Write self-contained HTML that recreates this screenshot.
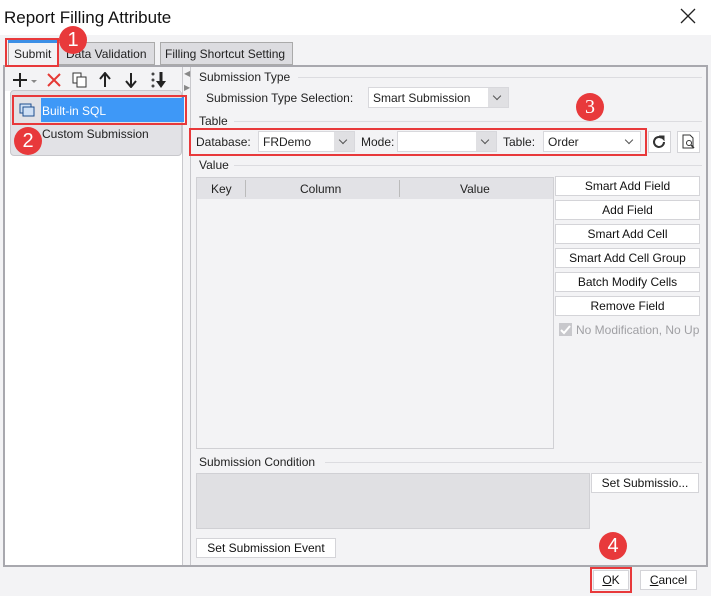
<!DOCTYPE html>
<html><head><style>
*{box-sizing:border-box;margin:0;padding:0}
body{width:711px;height:596px;background:#f3f3f5;font-family:"Liberation Sans",sans-serif;font-size:12px;color:#222;position:relative;overflow:hidden}
.a{position:absolute}
.t{position:absolute;white-space:nowrap;font-size:12px;line-height:14px}
.btn{position:absolute;background:#fff;border:1px solid #d4d4d8;text-align:center;font-size:12px;line-height:18px;color:#111}
.combo{position:absolute;background:#fff;border:1px solid #d8d8dc;height:21px}
.combo span{position:absolute;left:4px;top:3px;font-size:12px}
.combo i{position:absolute;right:0;top:0;width:20px;height:19px;background:#e0e0e3}
.combo i:after{content:"";position:absolute;left:6px;top:5px;width:5px;height:5px;border-right:1px solid #555;border-bottom:1px solid #555;transform:rotate(45deg)}
.sep{position:absolute;height:1px;background:#dcdce0}
.red{position:absolute;border:2px solid #e8393b}
.circ{position:absolute;width:28px;height:28px;border-radius:50%;background:#e8393b;color:#fff;font-size:20px;line-height:28px;text-align:center}
</style></head><body>
<div class="a" style="left:0;top:0;width:711px;height:35px;background:#fff"></div>
<div class="t" style="left:4px;top:8px;font-size:17px;line-height:20px;color:#111">Report Filling Attribute</div>
<svg class="a" style="left:680px;top:8px" width="16" height="16"><path d="M1 1L15 15M15 1L1 15" stroke="#222" stroke-width="1.3"/></svg>

<div class="a" style="left:8px;top:40px;width:50px;height:26px;background:#f3f3f5;border:1px solid #aaa;border-bottom:none"></div>
<div class="a" style="left:8px;top:40px;width:50px;height:3px;background:#3c8fe6"></div>
<div class="t" style="left:14px;top:47px">Submit</div>
<div class="a" style="left:58px;top:42px;width:97px;height:23px;background:#dcdce0;border:1px solid #aaa"></div>
<div class="t" style="left:66px;top:47px">Data Validation</div>
<div class="a" style="left:160px;top:42px;width:133px;height:23px;background:#dcdce0;border:1px solid #aaa"></div>
<div class="t" style="left:165px;top:47px">Filling Shortcut Setting</div>

<div class="a" style="left:3px;top:65px;width:705px;height:502px;border:2px solid #a8a8ae;background:#f3f3f5"></div>
<div class="a" style="left:5px;top:91px;width:177px;height:474px;background:#fff"></div>
<div class="a" style="left:182px;top:67px;width:1px;height:498px;background:#c8c8cc"></div>
<div class="a" style="left:190px;top:67px;width:1px;height:498px;background:#c8c8cc"></div>
<div class="a" style="left:182px;top:96px;width:2px;height:14px;background:#3c8fe6"></div>
<div class="t" style="left:184px;top:67px;font-size:8px;color:#888">◀<br>▶</div>
<svg class="a" style="left:12px;top:72px" width="26" height="16"><path d="M1 8H15M8 1V15" stroke="#222" stroke-width="2"/><path d="M19 8L22 11L25 8Z" fill="#888"/></svg>
<svg class="a" style="left:47px;top:73px" width="14" height="14"><path d="M1 1L13 13M13 1L1 13" stroke="#e53935" stroke-width="2"/></svg>
<svg class="a" style="left:72px;top:72px" width="16" height="16"><rect x="1" y="1" width="8" height="10" fill="#fff" stroke="#333"/><rect x="5" y="5" width="9" height="10" fill="#fff" stroke="#333"/></svg>
<svg class="a" style="left:99px;top:72px" width="12" height="16"><path d="M6 15V2M1 7L6 1L11 7" stroke="#222" stroke-width="2" fill="none"/></svg>
<svg class="a" style="left:125px;top:72px" width="12" height="16"><path d="M6 1V14M1 9L6 15L11 9" stroke="#222" stroke-width="2" fill="none"/></svg>
<svg class="a" style="left:150px;top:71px" width="18" height="18"><circle cx="3" cy="3" r="1.5" fill="#444"/><circle cx="3" cy="9" r="1.5" fill="#444"/><circle cx="3" cy="15" r="1.5" fill="#444"/><path d="M11 1V11" stroke="#222" stroke-width="3"/><path d="M6 10L11 17L16 10Z" fill="#222"/></svg>
<div class="a" style="left:10px;top:90px;width:172px;height:66px;background:#e2e2e6;border:1px solid #c8c8cc;border-radius:4px"></div>
<div class="a" style="left:41px;top:98px;width:143px;height:24px;background:#3e98f7"></div>
<svg class="a" style="left:19px;top:103px" width="16" height="14"><rect x="1" y="1" width="11" height="9" fill="#cfe0f5" stroke="#1f4f8f"/><rect x="4" y="4" width="11" height="9" fill="#cfe0f5" stroke="#1f4f8f"/></svg>
<div class="t" style="left:42px;top:104px;color:#fff">Built-in SQL</div>
<div class="t" style="left:42px;top:127px">Custom Submission</div>
<div class="red" style="left:12px;top:95px;width:175px;height:30px"></div>
<div class="red" style="left:5px;top:38px;width:54px;height:29px"></div>

<div class="t" style="left:199px;top:70px">Submission Type</div>
<div class="sep" style="left:298px;top:77px;width:404px"></div>
<div class="t" style="left:206px;top:91px">Submission Type Selection:</div>
<div class="combo" style="left:368px;top:87px;width:141px"><span>Smart Submission</span><i></i></div>
<div class="t" style="left:199px;top:114px">Table</div>
<div class="sep" style="left:234px;top:121px;width:468px"></div>
<div class="t" style="left:196px;top:135px">Database:</div>
<div class="combo" style="left:258px;top:131px;width:97px"><span>FRDemo</span><i></i></div>
<div class="t" style="left:361px;top:135px">Mode:</div>
<div class="combo" style="left:397px;top:131px;width:100px"><span></span><i></i></div>
<div class="t" style="left:503px;top:135px">Table:</div>
<div class="combo" style="left:543px;top:131px;width:98px"><span>Order</span><i style="background:#fff"></i></div>
<div class="red" style="left:189px;top:128px;width:458px;height:28px"></div>
<div class="a" style="left:648px;top:131px;width:23px;height:22px;background:#fff;border:1px solid #d4d4d8"></div>
<svg class="a" style="left:651px;top:134px" width="16" height="16"><path d="M13 8A5 5 0 1 1 11 4" stroke="#333" stroke-width="2" fill="none"/><path d="M9 2L13 2L13 6Z" fill="#333" stroke="#333"/></svg>
<div class="a" style="left:677px;top:131px;width:23px;height:22px;background:#fff;border:1px solid #d4d4d8"></div>
<svg class="a" style="left:681px;top:134px" width="16" height="16"><path d="M2 1H9L12 4V14H2Z" fill="#fff" stroke="#333"/><circle cx="8" cy="9" r="2.5" fill="none" stroke="#333"/><path d="M10 11L13 14" stroke="#333" stroke-width="1.5"/></svg>
<div class="t" style="left:199px;top:158px">Value</div>
<div class="sep" style="left:234px;top:165px;width:468px"></div>
<div class="a" style="left:196px;top:177px;width:358px;height:272px;background:#f3f3f5;border:1px solid #d0d0d4"></div>
<div class="a" style="left:197px;top:178px;width:356px;height:21px;background:#e2e2e6"></div>
<div class="a" style="left:245px;top:180px;width:1px;height:17px;background:#bbb"></div>
<div class="a" style="left:399px;top:180px;width:1px;height:17px;background:#bbb"></div>
<div class="t" style="left:211px;top:182px">Key</div>
<div class="t" style="left:300px;top:182px">Column</div>
<div class="t" style="left:460px;top:182px">Value</div>
<div class="btn" style="left:555px;top:176px;width:145px;height:20px">Smart Add Field</div>
<div class="btn" style="left:555px;top:200px;width:145px;height:20px">Add Field</div>
<div class="btn" style="left:555px;top:224px;width:145px;height:20px">Smart Add Cell</div>
<div class="btn" style="left:555px;top:248px;width:145px;height:20px">Smart Add Cell Group</div>
<div class="btn" style="left:555px;top:272px;width:145px;height:20px">Batch Modify Cells</div>
<div class="btn" style="left:555px;top:296px;width:145px;height:20px">Remove Field</div>
<div class="a" style="left:559px;top:323px;width:13px;height:13px;background:#c8c8cc"></div>
<svg class="a" style="left:559px;top:323px" width="13" height="13"><path d="M2 7L5 10L11 3" stroke="#fff" stroke-width="2" fill="none"/></svg>
<div class="t" style="left:576px;top:323px;color:#a0a0a4">No Modification, No Up</div>
<div class="t" style="left:199px;top:455px">Submission Condition</div>
<div class="sep" style="left:325px;top:462px;width:377px"></div>
<div class="a" style="left:196px;top:473px;width:394px;height:56px;background:#e0e0e3;border:1px solid #d0d0d4"></div>
<div class="btn" style="left:591px;top:473px;width:108px;height:20px">Set Submissio...</div>
<div class="btn" style="left:196px;top:538px;width:140px;height:20px">Set Submission Event</div>

<div class="btn" style="left:593px;top:570px;width:36px;height:20px"><u>O</u>K</div>
<div class="red" style="left:590px;top:567px;width:42px;height:26px"></div>
<div class="btn" style="left:640px;top:570px;width:57px;height:20px"><u>C</u>ancel</div>

<div class="circ" style="left:59px;top:26px">1</div>
<div class="circ" style="left:14px;top:127px">2</div>
<div class="circ" style="left:576px;top:93px;font-family:'Liberation Serif',serif">3</div>
<div class="circ" style="left:599px;top:532px">4</div>
</body></html>
